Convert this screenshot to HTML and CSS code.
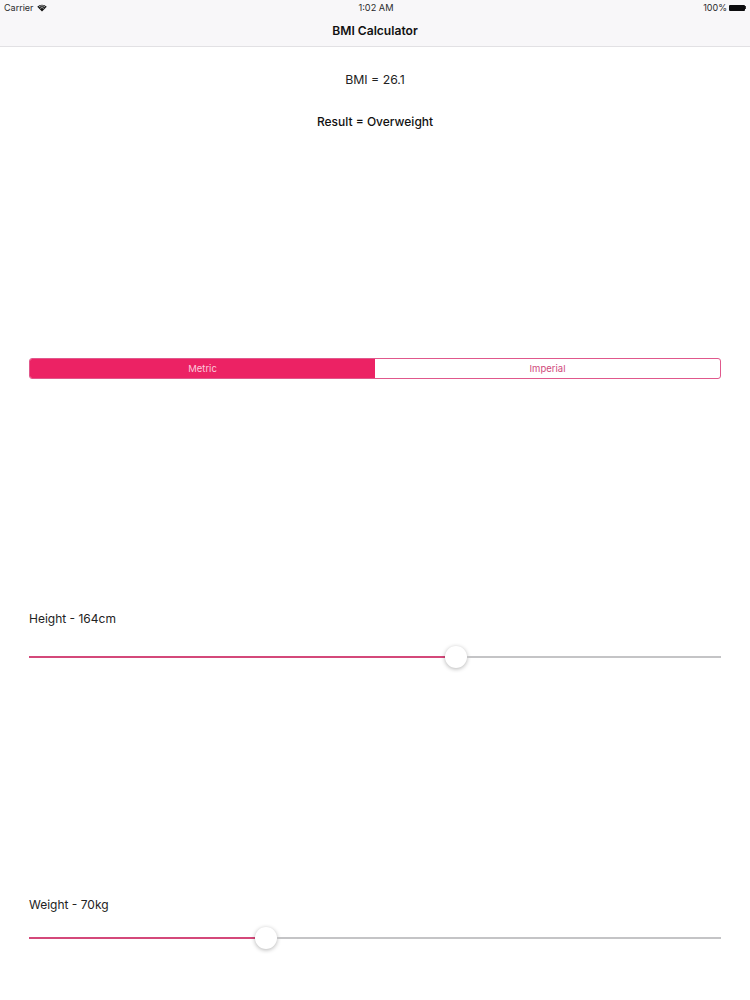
FILE: index.html
```html
<!DOCTYPE html>
<html lang="en">
<head>
<meta charset="utf-8">
<title>BMI Calculator</title>
<link rel="stylesheet" href="styles.css">
</head>
<body>
<header class="chrome">
  <div class="status">
    <div class="status-left">
      <span>Carrier</span>
      <svg class="wifi" viewBox="0 0 12 9" width="10" height="8"><path d="M6 8.6 0.3 3A8.2 8.2 0 0 1 11.7 3Z" fill="#111"/><path d="M2.2 3.4a5.4 5.4 0 0 1 7.6 0M3.7 5a3.3 3.3 0 0 1 4.6 0" stroke="#f8f7f9" stroke-width=".8" fill="none"/></svg>
    </div>
    <span class="status-time">1:02 AM</span>
    <div class="status-right">
      <span>100%</span>
      <span class="battery"></span><span class="battery-tip"></span>
    </div>
  </div>
  <h1 class="nav-title">BMI Calculator</h1>
</header>
<main class="content">
  <p class="bmi">BMI = 26.1</p>
  <p class="result">Result = Overweight</p>
  <div class="segmented">
    <div class="segment segment-active">Metric</div>
    <div class="segment">Imperial</div>
  </div>
  <section class="control control-height">
    <div class="control-label">Height - 164cm</div>
    <div class="slider">
      <span class="fill" style="width: 416px"></span><span class="thumb"></span><span class="rest"></span>
    </div>
  </section>
  <section class="control control-weight">
    <div class="control-label">Weight - 70kg</div>
    <div class="slider">
      <span class="fill" style="width: 226px"></span><span class="thumb"></span><span class="rest"></span>
    </div>
  </section>
</main>
</body>
</html>
```
FILE: styles.css
```css
* { box-sizing: border-box; }
html, body { margin: 0; padding: 0; }
body {
  width: 750px;
  height: 1000px;
  overflow: hidden;
  background: #fff;
  color: #1a1a1c;
  font-family: Inter, "Liberation Sans", sans-serif;
}
.chrome {
  height: 47px;
  background: #f8f7f9;
  border-bottom: 1px solid #e2e1e4;
}
.status {
  height: 15px;
  display: grid;
  grid-template-columns: 1fr auto 1fr;
  align-items: center;
  padding: 0 4px;
  font-size: 9px;
  line-height: 15px;
  color: #2a2a2c;
}
.status-left { display: flex; align-items: center; gap: 3px; }
.status-right { display: flex; align-items: center; justify-content: flex-end; }
.status-right span:first-child { margin-right: 2px; }
.status-time { font-size: 9.2px; padding-left: 2px; }
.battery { width: 16px; height: 6px; background: #0c0c0e; border-radius: 1px; }
.battery-tip { width: 1px; height: 3px; background: #333; }
.nav-title {
  margin: 0;
  height: 31px;
  padding-top: 1px;
  text-align: center;
  font-size: 12.1px;
  line-height: 30px;
  font-weight: 600;
  color: #111;
}
.content {
  padding: 0 29px;
  display: flex;
  flex-direction: column;
}
.bmi {
  margin: 25px 0 0;
  text-align: center;
  font-size: 12.3px;
  line-height: 16px;
  color: #222;
}
.result {
  margin: 26px 0 0;
  text-align: center;
  font-size: 12px;
  line-height: 16px;
  font-weight: 500;
  color: #111;
}
.segmented {
  margin-top: 228px;
  height: 21px;
  display: flex;
  border: 1px solid #e0588c;
  border-radius: 3px;
  overflow: hidden;
}
.segment {
  flex: 1;
  text-align: center;
  font-size: 9.5px;
  line-height: 19px;
  color: #d04a7c;
}
.segment-active {
  background: #ec2264;
  color: #fbc9da;
}
.control-height { margin-top: 232px; }
.control-weight { margin-top: 229px; }
.control-label {
  font-size: 12px;
  line-height: 16px;
  color: #222;
}
.slider {
  margin-top: 19px;
  height: 22px;
  display: flex;
  align-items: center;
}
.control-weight .slider { margin-top: 14px; }
.fill { height: 2px; background: #d4487a; }
.rest { flex: 1; height: 2px; background: #c4c4c6; }
.thumb {
  width: 22px;
  height: 22px;
  flex: none;
  border-radius: 50%;
  background: #fff;
  box-shadow: 0 1px 4px rgba(0, 0, 0, .3);
}
```
